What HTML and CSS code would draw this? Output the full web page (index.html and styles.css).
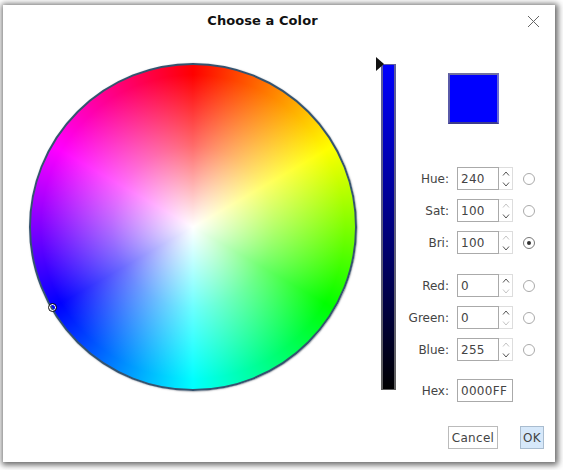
FILE: index.html
```html
<!DOCTYPE html>
<html lang="en">
<head>
    <meta charset="UTF-8">
    <title>Choose a Color</title>
    <link rel="stylesheet" href="styles.css">
</head>
<body>
    <div class="dialog">
        <div class="title-bar">
            <h1 class="title">Choose a Color</h1>
            <svg class="close" viewBox="0 0 13 13"><path d="M1 1l11 11M12 1L1 12"></path></svg>
        </div>
        <div class="content">
            <div class="wheel">
                <div class="wheel-fade"></div>
                <div class="marker"></div>
            </div>
            <div class="slider">
                <svg class="slider-arrow" viewBox="0 0 8 14"><path d="M0 0l8 7-8 7z"></path></svg>
            </div>
            <div class="controls">
                <div class="swatch"></div>
                <div class="fields">
                    <div class="group">
                        <div class="row">
                            <span class="label">Hue:</span>
                            <div class="field">240</div>
                            <div class="spin">
                                <svg viewBox="0 0 8 5"><path d="M1 4.5L4 1l3 3.5"></path></svg>
                                <svg viewBox="0 0 8 5"><path d="M1 .5L4 4l3-3.5"></path></svg>
                            </div>
                            <span class="radio"></span>
                        </div>
                        <div class="row">
                            <span class="label">Sat:</span>
                            <div class="field">100</div>
                            <div class="spin">
                                <svg class="off" viewBox="0 0 8 5"><path d="M1 4.5L4 1l3 3.5"></path></svg>
                                <svg viewBox="0 0 8 5"><path d="M1 .5L4 4l3-3.5"></path></svg>
                            </div>
                            <span class="radio"></span>
                        </div>
                        <div class="row">
                            <span class="label">Bri:</span>
                            <div class="field">100</div>
                            <div class="spin">
                                <svg class="off" viewBox="0 0 8 5"><path d="M1 4.5L4 1l3 3.5"></path></svg>
                                <svg viewBox="0 0 8 5"><path d="M1 .5L4 4l3-3.5"></path></svg>
                            </div>
                            <span class="radio checked"></span>
                        </div>
                    </div>
                    <div class="group">
                        <div class="row">
                            <span class="label">Red:</span>
                            <div class="field">0</div>
                            <div class="spin">
                                <svg viewBox="0 0 8 5"><path d="M1 4.5L4 1l3 3.5"></path></svg>
                                <svg class="off" viewBox="0 0 8 5"><path d="M1 .5L4 4l3-3.5"></path></svg>
                            </div>
                            <span class="radio"></span>
                        </div>
                        <div class="row">
                            <span class="label">Green:</span>
                            <div class="field">0</div>
                            <div class="spin">
                                <svg viewBox="0 0 8 5"><path d="M1 4.5L4 1l3 3.5"></path></svg>
                                <svg class="off" viewBox="0 0 8 5"><path d="M1 .5L4 4l3-3.5"></path></svg>
                            </div>
                            <span class="radio"></span>
                        </div>
                        <div class="row">
                            <span class="label">Blue:</span>
                            <div class="field">255</div>
                            <div class="spin">
                                <svg class="off" viewBox="0 0 8 5"><path d="M1 4.5L4 1l3 3.5"></path></svg>
                                <svg viewBox="0 0 8 5"><path d="M1 .5L4 4l3-3.5"></path></svg>
                            </div>
                            <span class="radio"></span>
                        </div>
                    </div>
                    <div class="row hex-row">
                        <span class="label">Hex:</span>
                        <div class="field hex">0000FF</div>
                    </div>
                </div>
            </div>
        </div>
        <div class="actions">
            <button class="btn">Cancel</button>
            <button class="btn primary">OK</button>
        </div>
    </div>
</body>
</html>
```

FILE: styles.css
```css
body {
    margin: 0;
    padding: 5px 8px 8px 3px;
    height: 457px;
    background: #fff;
    font-family: "DejaVu Sans", sans-serif;
    font-size: 12px;
    color: #444;
    overflow: hidden;
}
.dialog {
    display: flex;
    flex-direction: column;
    width: 552px;
    height: 457px;
    background: #fff;
    box-shadow: 1px 1px 6px 2px rgba(0, 0, 0, 0.6);
}
.title-bar {
    position: relative;
    height: 58px;
    flex-shrink: 0;
    text-align: center;
}
.title {
    margin: 0;
    padding: 8px 33px 0 0;
    font-size: 13px;
    line-height: 16px;
    font-weight: bold;
    letter-spacing: 0.07px;
    color: #111;
}
.close {
    position: absolute;
    top: 10px;
    right: 15px;
    width: 13px;
    height: 13px;
}
.close path {
    fill: none;
    stroke: #666;
    stroke-width: 1;
}
.content {
    display: flex;
    padding-left: 26px;
}
.wheel {
    position: relative;
    box-sizing: border-box;
    width: 328px;
    height: 328px;
    border-radius: 50%;
    border: 2px solid #34536f;
    box-shadow: 0.5px 0.5px 1.5px rgba(20, 30, 50, 0.55);
    background: conic-gradient(#f00, #ff0, #0f0, #0ff, #00f, #f0f, #f00);
}
.wheel-fade {
    width: 100%;
    height: 100%;
    border-radius: 50%;
    background: radial-gradient(closest-side, #fff, rgba(255, 255, 255, 0.42) 50%, rgba(255, 255, 255, 0) 94%);
}
.marker {
    position: absolute;
    left: 17px;
    top: 238px;
    box-sizing: border-box;
    width: 9px;
    height: 9px;
    border-radius: 50%;
    border: 1.5px solid #111;
    box-shadow: inset 0 0 0 1px #fff;
}
.slider {
    position: relative;
    box-sizing: border-box;
    width: 15px;
    height: 326px;
    margin: 1px 0 0 24px;
    border: 2px solid rgba(125, 125, 125, 0.75);
    border-top-width: 1px;
    border-bottom-width: 1px;
    background: linear-gradient(#00f, #000) border-box;
}
.slider-arrow {
    position: absolute;
    left: -7px;
    top: -8px;
    width: 8px;
    height: 14px;
}
.slider-arrow path {
    fill: #111;
}
.controls {
    display: flex;
    flex-direction: column;
}
.swatch {
    box-sizing: border-box;
    width: 51px;
    height: 51px;
    margin: 10px 0 0 52px;
    background: #00f;
    border: 2px solid;
    border-color: #73739f #6a6ad4 #3c3c8c #5a5aa8;
}
.fields {
    display: flex;
    flex-direction: column;
    gap: 20px;
    margin-top: 43px;
}
.group {
    display: flex;
    flex-direction: column;
    gap: 9px;
}
.row {
    display: flex;
    align-items: center;
    height: 23px;
}
.hex-row {
    margin-top: -2px;
}
.label {
    width: 53px;
    text-align: right;
    margin-right: 8px;
}
.field {
    box-sizing: border-box;
    width: 42px;
    height: 23px;
    padding-left: 3px;
    line-height: 23px;
    letter-spacing: 0.3px;
    border: 1px solid #aaa;
    background: #fff;
}
.field.hex {
    width: 56px;
}
.spin {
    box-sizing: border-box;
    display: flex;
    flex-direction: column;
    align-items: center;
    gap: 6px;
    width: 14px;
    height: 23px;
    padding-top: 3px;
    border: 1px solid #ddd;
    border-left: none;
}
.spin svg {
    width: 8px;
    height: 5px;
}
.spin path {
    fill: none;
    stroke: #555;
    stroke-width: 1;
}
.spin .off path {
    stroke: #c4c4c4;
}
.radio {
    position: relative;
    box-sizing: border-box;
    width: 12px;
    height: 12px;
    margin-left: 10px;
    border: 1px solid #aaa;
    border-radius: 50%;
}
.radio.checked {
    border-color: #777;
}
.radio.checked::after {
    content: "";
    position: absolute;
    left: 3px;
    top: 3px;
    width: 4px;
    height: 4px;
    border-radius: 50%;
    background: #333;
}
.actions {
    display: flex;
    justify-content: flex-end;
    gap: 22px;
    margin-top: 24px;
    padding-right: 11px;
}
.btn {
    height: 23px;
    padding: 0;
    width: 50px;
    font-family: inherit;
    font-size: 12px;
    letter-spacing: 0.3px;
    color: #444;
    background: #fff;
    border: 1px solid #bbb;
}
.btn.primary {
    width: 24px;
    background: #d6e8fa;
    border-color: #a9bccf;
}
```
